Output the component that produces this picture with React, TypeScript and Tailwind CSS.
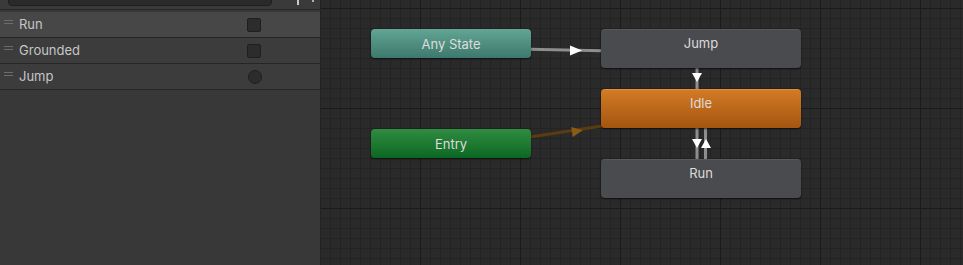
import React from "react";

type Param = { name: string; kind: "bool" | "trigger"; selected?: boolean };

const params: Param[] = [
  { name: "Run", kind: "bool", selected: true },
  { name: "Grounded", kind: "bool" },
  { name: "Jump", kind: "trigger" },
];

const ParamRow: React.FC<{ p: Param }> = ({ p }) => (
  <div
    className={`flex h-[26px] items-center border-b border-[#262626] ${
      p.selected ? "bg-[#474747]" : "bg-[#3c3c3c]"
    }`}
  >
    <div className="ml-[4px] flex w-[9px] flex-col gap-[2px] self-start pt-[8px]">
      <div className="h-px bg-[#6c6c6c]" />
      <div className="h-px bg-[#6c6c6c]" />
    </div>
    <span className="ml-[6px] w-[228px] text-[13px] text-[#c6c6c6]">{p.name}</span>
    {p.kind === "bool" ? (
      <div className="h-[14px] w-[14px] rounded-[2px] border border-[#1f1f1f] bg-[#2c2c2c]" />
    ) : (
      <div className="ml-px h-[14px] w-[14px] rounded-full border border-[#1f1f1f] bg-[#2c2c2c]" />
    )}
  </div>
);

const ParamsPanel: React.FC = () => (
  <div className="flex h-full w-[321px] shrink-0 flex-col border-r border-[#222] bg-[#383838]">
    {/* search header, scrolled mostly out of view */}
    <div className="flex h-[10px] items-end overflow-hidden border-b border-[#272727] bg-[#3a3a3a]">
      <div className="mb-[3px] ml-[8px] flex h-[20px] w-[264px] items-end rounded-[4px] border border-[#1e1e1e] bg-[#2a2a2a] pb-[3px] pl-[6px]">
        <span className="text-[11px] leading-none text-[#8a8a8a]">⌕</span>
        <span className="ml-[6px] text-[13px] leading-none text-[#7c7c7c]">Name</span>
      </div>
      <div className="mb-[4px] ml-[25px] h-[8px] w-[2px] bg-[#c8c8c8]" />
      <div className="mb-[7px] ml-[13px] h-[2px] w-[2px] bg-[#b0b0b0]" />
    </div>
    <div className="pt-[2px]">
      {params.map((p) => (
        <ParamRow key={p.name} p={p} />
      ))}
    </div>
  </div>
);

type NodeProps = {
  label: string;
  className: string;
};

const StateNode: React.FC<NodeProps> = ({ label, className }) => (
  <div
    className={`absolute flex justify-center rounded-[4px] text-[13px] leading-[16px] text-[#dcdcdc] shadow-[0_1px_2px_rgba(0,0,0,0.6)] ${className}`}
  >
    {label}
  </div>
);

const Transitions: React.FC = () => (
  <svg className="absolute inset-0" width="642" height="265">
    {/* Any State -> Jump */}
    <line x1="209" y1="49.3" x2="281" y2="50.8" stroke="#8e8e8e" strokeWidth="3" />
    <polygon points="249,45.5 261,50.5 249,55.5" fill="#ffffff" />
    {/* Jump -> Idle */}
    <line x1="376" y1="67" x2="376" y2="90" stroke="#8e8e8e" strokeWidth="3" />
    <polygon points="371,73 381,73 376,82" fill="#ffffff" />
    {/* Entry -> Idle */}
    <line x1="209" y1="137" x2="281" y2="126" stroke="#5a3c10" strokeWidth="3" />
    <polygon points="0,-5 11,0 0,5" fill="#8a5b14" transform="translate(251,132) rotate(-8.6)" />
    {/* Idle <-> Run */}
    <line x1="376" y1="127" x2="376" y2="160" stroke="#8e8e8e" strokeWidth="3" />
    <line x1="384.5" y1="127" x2="384.5" y2="160" stroke="#8e8e8e" strokeWidth="3" />
    <polygon points="371,139 381,139 376,148" fill="#ffffff" />
    <polygon points="380,148 390,148 385,139" fill="#ffffff" />
  </svg>
);

const Canvas: React.FC = () => (
  <div className="relative h-full flex-1 overflow-hidden bg-[#2a2a2a] [background-image:linear-gradient(to_right,#1b1b1b_1px,transparent_1px),linear-gradient(to_bottom,#1b1b1b_1px,transparent_1px),linear-gradient(to_right,#232323_1px,transparent_1px),linear-gradient(to_bottom,#232323_1px,transparent_1px)] [background-position:99px_8px] [background-size:100px_100px,100px_100px,10px_10px,10px_10px]">
    <Transitions />
    <StateNode
      label="Any State"
      className="left-[50px] top-[29px] h-[29px] w-[160px] items-center bg-gradient-to-b from-[#62a694] to-[#3d786c]"
    />
    <StateNode
      label="Entry"
      className="left-[50px] top-[129px] h-[29px] w-[160px] items-center bg-gradient-to-b from-[#2f8c41] to-[#0a6823]"
    />
    <StateNode
      label="Jump"
      className="left-[280px] top-[29px] h-[39px] w-[200px] border-t border-[#58595d] bg-[#4a4b4f] pt-[5px]"
    />
    <StateNode
      label="Idle"
      className="left-[280px] top-[89px] h-[39px] w-[200px] border-t border-[#e08d3c] bg-gradient-to-b from-[#d27b25] to-[#a4550f] pt-[5px]"
    />
    <StateNode
      label="Run"
      className="left-[280px] top-[159px] h-[39px] w-[200px] border-t border-[#58595d] bg-[#4a4b4f] pt-[5px]"
    />
  </div>
);

export default function App() {
  return (
    <div className="flex h-[265px] w-[963px] overflow-hidden font-['Inter','Liberation_Sans',sans-serif]">
      <ParamsPanel />
      <Canvas />
    </div>
  );
}
